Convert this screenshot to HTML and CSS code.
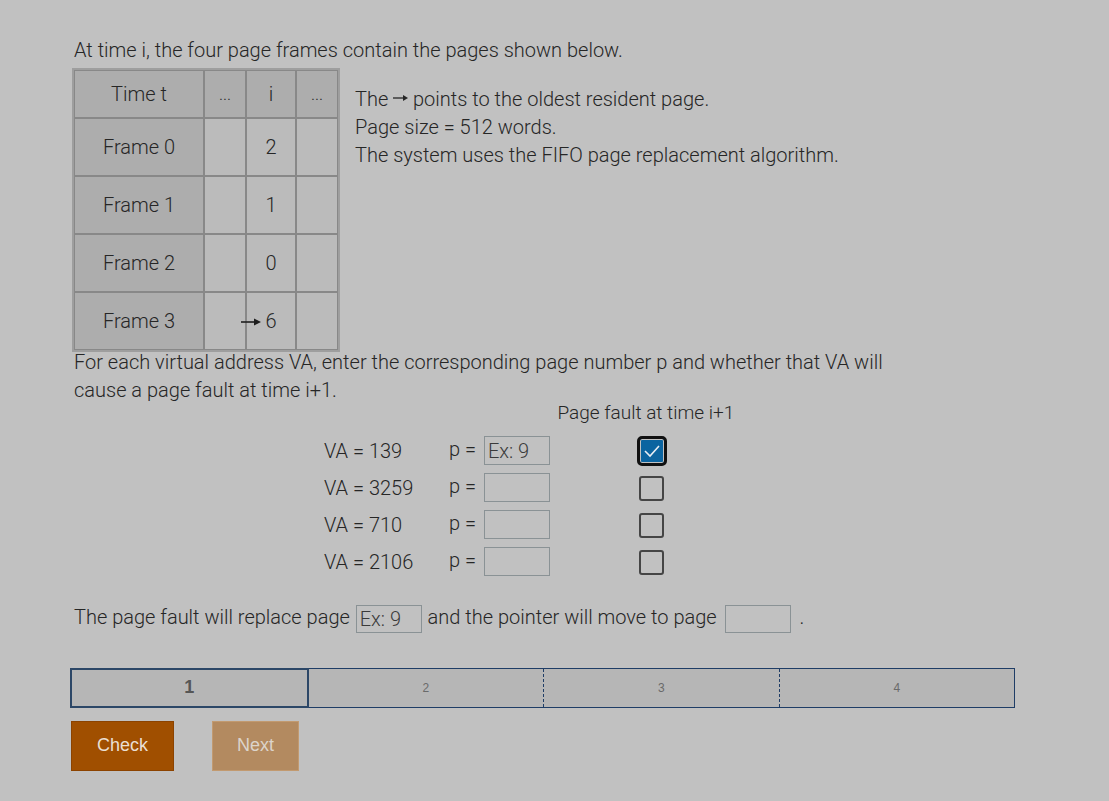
FILE: index.html
```html
<!DOCTYPE html>
<html lang="en">

<head>
    <meta charset="UTF-8">
    <meta name="viewport" content="width=device-width, initial-scale=1.0">
    <title>FIFO page replacement</title>
    <link rel="stylesheet" href="styles.css">
</head>

<body>
    <div class="page">
        <p class="intro">At time i, the four page frames contain the pages shown below.</p>
        <div class="frames">
            <table class="frame_table">
                <tr>
                    <th class="label">Time t</th>
                    <th class="dots">...</th>
                    <th class="now">i</th>
                    <th class="dots">...</th>
                </tr>
                <tr>
                    <td class="label">Frame 0</td>
                    <td></td>
                    <td>2</td>
                    <td></td>
                </tr>
                <tr>
                    <td class="label">Frame 1</td>
                    <td></td>
                    <td>1</td>
                    <td></td>
                </tr>
                <tr>
                    <td class="label">Frame 2</td>
                    <td></td>
                    <td>0</td>
                    <td></td>
                </tr>
                <tr>
                    <td class="label">Frame 3</td>
                    <td></td>
                    <td class="pointer">
                        <svg class="arrow" width="20" height="10" viewBox="0 0 20 10"><path d="M0 5 H14" stroke="#1e1e1e" stroke-width="1.6"/><path d="M13 1.5 L20 5 L13 8.5 Z" fill="#1e1e1e"/></svg>6
                    </td>
                    <td></td>
                </tr>
            </table>
            <div class="notes">
                <p>The <svg class="note_arrow" width="15" height="8" viewBox="0 0 15 8"><path d="M0 4 H11" stroke="#262626" stroke-width="1.3"/><path d="M10 1 L15 4 L10 7 Z" fill="#262626"/></svg> points to the oldest resident page.</p>
                <p>Page size = 512 words.</p>
                <p>The system uses the FIFO page replacement algorithm.</p>
            </div>
        </div>
        <p class="prompt">For each virtual address VA, enter the corresponding page number p and whether that VA will cause a page fault at time i+1.</p>

        <table class="va_table">
            <tr class="head_row">
                <td></td>
                <td></td>
                <td class="fault_head">Page fault at time i+1</td>
            </tr>
            <tr>
                <td class="va">VA = 139</td>
                <td class="p">p = <input type="text" class="field" placeholder="Ex: 9"></td>
                <td class="fault"><span class="box checked"><svg width="18" height="14" viewBox="0 0 18 14"><path d="M2 7 L7 12 L16 2" fill="none" stroke="#e8eef4" stroke-width="1.6"/></svg></span></td>
            </tr>
            <tr>
                <td class="va">VA = 3259</td>
                <td class="p">p = <input type="text" class="field"></td>
                <td class="fault"><span class="box"></span></td>
            </tr>
            <tr>
                <td class="va">VA = 710</td>
                <td class="p">p = <input type="text" class="field"></td>
                <td class="fault"><span class="box"></span></td>
            </tr>
            <tr>
                <td class="va">VA = 2106</td>
                <td class="p">p = <input type="text" class="field"></td>
                <td class="fault"><span class="box"></span></td>
            </tr>
        </table>

        <p class="replace">The page fault will replace page <input type="text" class="field inline" placeholder="Ex: 9"> and the pointer will move to page <input type="text" class="field inline last"> .</p>

        <div class="progress">
            <div class="step current">1</div>
            <div class="step">2</div>
            <div class="step">3</div>
            <div class="step">4</div>
        </div>

        <div class="buttons">
            <button class="check">Check</button>
            <button class="next" disabled>Next</button>
        </div>
    </div>
</body>

</html>
```

FILE: styles.css
```css
body {
    margin: 0;
    background-color: rgb(193, 193, 193);
    font-family: Roboto, "Liberation Sans", sans-serif;
    font-weight: 300;
    font-size: 20px;
    color: #262626;
}

p {
    margin: 0;
    line-height: 28px;
}

.page {
    width: 945px;
    padding: 36px 0 0 70px;
}

.intro,
.prompt,
.replace {
    padding-left: 4px;
}

.intro {
    margin-bottom: 4px;
}

.frames {
    display: flex;
    align-items: flex-start;
}

.frame_table {
    border-collapse: separate;
    border-spacing: 0;
    border: 2px solid #9e9e9e;
    margin-left: 2px;
}

.frame_table th,
.frame_table td {
    border: 1px solid #888;
    background-color: #bbbbbb;
    text-align: center;
    font-weight: 300;
    padding: 0;
    height: 56px;
}

.frame_table th {
    height: 46px;
    background-color: #adadad;
}

.frame_table .label {
    width: 128px;
    background-color: #adadad;
}

.frame_table .dots {
    width: 40px;
    font-size: 17px;
}

.frame_table .now {
    width: 48px;
}

.pointer {
    position: relative;
}

.arrow {
    position: absolute;
    left: -6px;
    top: 24px;
}

.notes {
    margin: 17px 0 0 15px;
}

.note_arrow {
    vertical-align: 4px;
}

.prompt {
    width: 840px;
    margin-top: -4px;
}

.va_table {
    border-collapse: collapse;
    margin-left: 254px;
}

.va_table td {
    padding: 0;
    height: 37px;
}

.va_table .head_row td {
    height: 28px;
}

.va_table .fault_head {
    text-align: center;
    font-size: 19px;
    line-height: 18px;
    vertical-align: top;
    white-space: nowrap;
    width: 184px;
    padding-left: 4px;
}

.va {
    width: 125px;
}

.p {
    white-space: nowrap;
}

.field {
    width: 66px;
    height: 29px;
    box-sizing: border-box;
    border: 1px solid #8a9295;
    background-color: #c1c1c1;
    font-family: Roboto, "Liberation Sans", sans-serif;
    font-weight: 300;
    font-size: 20px;
    padding: 0 3px;
    margin-left: 3px;
    vertical-align: middle;
}

.field::placeholder {
    color: #3a3a3a;
}

.fault {
    text-align: center;
    padding-left: 16px !important;
}

.box {
    display: inline-block;
    width: 25px;
    height: 25px;
    box-sizing: border-box;
    border: 2px solid #454545;
    border-radius: 3px;
    vertical-align: middle;
}

.box.checked {
    width: 30px;
    height: 30px;
    border: 3px solid #111;
    border-radius: 5px;
    background-color: #0b64a0;
    box-shadow: inset 0 0 0 1px #c1c1c1;
    display: inline-flex;
    align-items: center;
    justify-content: center;
}

.replace {
    margin-top: 23px;
}

.field.inline {
    height: 28px;
    margin: 0 1px;
}

.field.inline.last {
    margin: 0 4px 0 3px;
}

.progress {
    display: flex;
    margin-top: 35px;
    height: 40px;
    border: 1px solid #1f3d66;
    background-color: #b6b6b6;
    box-sizing: border-box;
    font-family: "Liberation Sans", Arial, sans-serif;
}

.step {
    flex: 1;
    display: flex;
    align-items: center;
    justify-content: center;
    font-size: 12px;
    color: #6a6a6a;
    border-left: 1px dashed #1f3d66;
}

.step.current {
    border: 2px solid #2c4767;
    margin: -1px 0 -1px -1px;
    font-size: 18px;
    font-weight: bold;
    color: #565656;
}

.step.current + .step {
    border-left: none;
}

.buttons {
    display: flex;
    gap: 38px;
    margin-top: 13px;
    padding-left: 1px;
}

.buttons button {
    height: 50px;
    font-family: "Liberation Sans", Arial, sans-serif;
    font-size: 18px;
    border-radius: 0;
}

.check {
    width: 103px;
    background-color: #a04f00;
    border: 1px solid #8c4300;
    color: #eadfd3;
}

.next {
    width: 87px;
    background-color: #b38a60;
    border: 1px solid #c29a70;
    color: #dcd4cb;
}
```
